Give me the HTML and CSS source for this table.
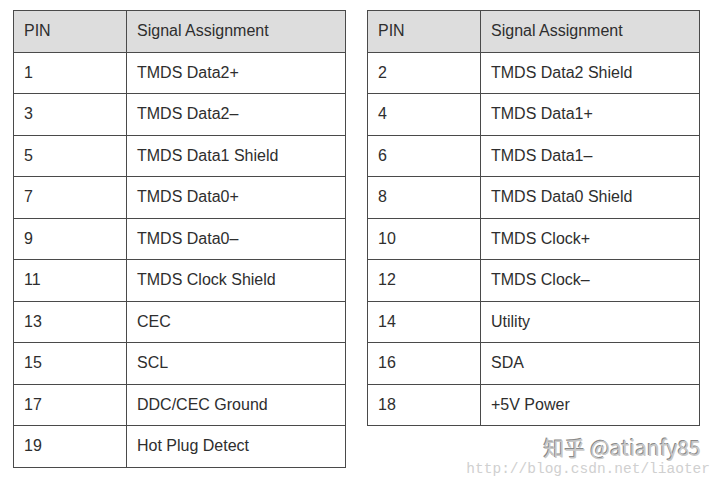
FILE: index.html
```html
<!DOCTYPE html>
<html lang="en">
<head>
<meta charset="utf-8">
<title>HDMI Pin Assignment</title>
<link rel="stylesheet" href="styles.css">
</head>
<body>
<div class="tables">
  <table class="pins">
    <tr class="head"><td class="pin">PIN</td><td class="sig">Signal Assignment</td></tr>
    <tr><td class="pin">1</td><td class="sig">TMDS Data2+</td></tr>
    <tr><td class="pin">3</td><td class="sig">TMDS Data2–</td></tr>
    <tr><td class="pin">5</td><td class="sig">TMDS Data1 Shield</td></tr>
    <tr><td class="pin">7</td><td class="sig">TMDS Data0+</td></tr>
    <tr><td class="pin">9</td><td class="sig">TMDS Data0–</td></tr>
    <tr><td class="pin">11</td><td class="sig">TMDS Clock Shield</td></tr>
    <tr><td class="pin">13</td><td class="sig">CEC</td></tr>
    <tr><td class="pin">15</td><td class="sig">SCL</td></tr>
    <tr><td class="pin">17</td><td class="sig">DDC/CEC Ground</td></tr>
    <tr><td class="pin">19</td><td class="sig">Hot Plug Detect</td></tr>
  </table>
  <div class="right">
    <table class="pins">
      <tr class="head"><td class="pin">PIN</td><td class="sig">Signal Assignment</td></tr>
      <tr><td class="pin">2</td><td class="sig">TMDS Data2 Shield</td></tr>
      <tr><td class="pin">4</td><td class="sig">TMDS Data1+</td></tr>
      <tr><td class="pin">6</td><td class="sig">TMDS Data1–</td></tr>
      <tr><td class="pin">8</td><td class="sig">TMDS Data0 Shield</td></tr>
      <tr><td class="pin">10</td><td class="sig">TMDS Clock+</td></tr>
      <tr><td class="pin">12</td><td class="sig">TMDS Clock–</td></tr>
      <tr><td class="pin">14</td><td class="sig">Utility</td></tr>
      <tr><td class="pin">16</td><td class="sig">SDA</td></tr>
      <tr><td class="pin">18</td><td class="sig">+5V Power</td></tr>
    </table>
    <div class="marks">
      <div class="zhihu">知乎 @atianfy85</div>
      <div class="csdn">http://blog.csdn.net/liaoter</div>
    </div>
  </div>
</div>
</body>
</html>
```
FILE: styles.css
```css
html, body {
  margin: 0;
  padding: 0;
  background: #ffffff;
}
body {
  font-family: "Liberation Sans", Arial, sans-serif;
  color: #2e2e2e;
}
.tables {
  display: flex;
  align-items: flex-start;
  gap: 21px;
  padding: 10px 0 0 13px;
}
.pins {
  border-collapse: collapse;
  font-size: 16px;
}
.pins td {
  border: 1px solid #4a4a4a;
  height: 41.5px;
  padding: 0 10px;
  box-sizing: border-box;
  vertical-align: middle;
}
.pins .pin {
  width: 113px;
}
.pins .sig {
  width: 219px;
}
.head td {
  background: #dddddd;
}
.right {
  display: flex;
  flex-direction: column;
}
.marks {
  display: flex;
  flex-direction: column;
  align-items: flex-end;
  margin-top: 9px;
  margin-right: -10px;
}
.zhihu {
  font-family: "Noto Sans CJK SC", "Liberation Sans", sans-serif;
  font-size: 21px;
  line-height: 25px;
  color: #c8c8c8;
  margin-right: 9px;
  text-shadow: -1px -1px 0 #8a8a8a;
}
.csdn {
  font-family: "Liberation Mono", "Courier New", monospace;
  font-size: 14.5px;
  line-height: 15px;
  margin-top: 2px;
  color: #d0d0d0;
}
```
